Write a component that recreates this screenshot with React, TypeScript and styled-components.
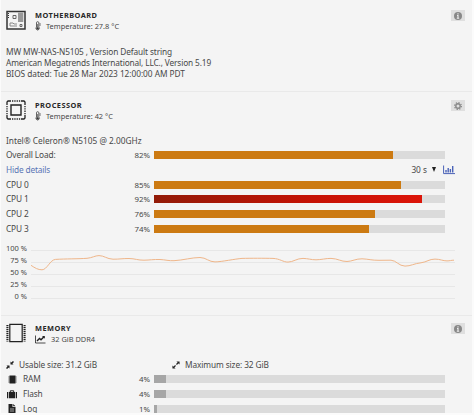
import React from 'react';
import styled, { createGlobalStyle } from 'styled-components';

const cores = [
  { name: 'CPU 0', load: 85 },
  { name: 'CPU 1', load: 92 },
  { name: 'CPU 2', load: 76 },
  { name: 'CPU 3', load: 74 },
];

const App = () => {
  return (
    <React.Fragment>
      <GlobalStyle />
      <Dashboard>
        <Section $height={91}>
          <Header $top={10}>
            <MotherboardIcon />
            <Heading>
              <Title>MOTHERBOARD</Title>
              <Subtitle>
                <ThermometerIcon />
                <Small>Temperature: 27.8 °C</Small>
              </Subtitle>
            </Heading>
            <InfoButton />
          </Header>
          <Details>
            <Line $tracking={-0.12}>MW MW-NAS-N5105 , Version Default string</Line>
            <Line $tracking={-0.13}>
              American Megatrends International, LLC., Version 5.19
            </Line>
            <Line $tracking={-0.04}>
              BIOS dated: Tue 28 Mar 2023 12:00:00 AM PDT
            </Line>
          </Details>
        </Section>
        <Section $height={224}>
          <Header $top={8}>
            <ProcessorIcon />
            <Heading>
              <Title>PROCESSOR</Title>
              <Subtitle>
                <ThermometerIcon />
                <Small>Temperature: 42 °C</Small>
              </Subtitle>
            </Heading>
            <GearButton />
          </Header>
          <Model>Intel® Celeron® N5105 @ 2.00GHz</Model>
          <Usage label="Overall Load:" load={82} />
          <Controls>
            <Link>Hide details</Link>
            <Interval>
              30 s
              <Caret />
              <ChartIcon />
            </Interval>
          </Controls>
          {cores.map((core) => (
            <Usage key={core.name} label={core.name} load={core.load} />
          ))}
          <LoadChart />
        </Section>
        <Section $height={98}>
          <Header $top={7}>
            <MemoryIcon />
            <Heading>
              <Title>MEMORY</Title>
              <Subtitle>
                <TrendIcon />
                <Small>32 GiB DDR4</Small>
              </Subtitle>
            </Heading>
            <InfoButton />
          </Header>
          <Sizes>
            <Size>
              <CompressIcon />
              Usable size: 31.2 GiB
            </Size>
            <Size>
              <ExpandIcon />
              Maximum size: 32 GiB
            </Size>
          </Sizes>
          <Usage label="RAM" icon={<RamIcon />} load={4} muted />
          <Usage label="Flash" icon={<FlashIcon />} load={4} muted />
          <Usage label="Log" icon={<LogIcon />} load={1} muted />
        </Section>
      </Dashboard>
    </React.Fragment>
  );
};

export default App;

type UsageProps = {
  label: string;
  load: number;
  icon?: React.ReactNode;
  muted?: boolean;
};

const Usage = ({ label, load, icon, muted }: UsageProps) => (
  <UsageRow>
    <Label>
      {icon && <IconSlot>{icon}</IconSlot>}
      {label}
    </Label>
    <Percent>{load}%</Percent>
    <Track>
      <Fill
        $tone={muted ? 'muted' : load > 90 ? 'critical' : 'warning'}
        style={{ width: `${muted && load > 1 ? load + 0.1 : load}%` }}
      />
    </Track>
  </UsageRow>
);

const LoadChart = () => (
  <Chart>
    <Axis>
      {[100, 75, 50, 25, 0].map((tick) => (
        <Tick key={tick}>{tick} %</Tick>
      ))}
    </Axis>
    <svg width="424" height="56" viewBox="32 246 424 56" fill="none">
      {[250.5, 262.5, 274.5, 286.5, 298.5].map((y) => (
        <path key={y} d={`M32 ${y}H456`} stroke="#e7e7e7" />
      ))}
      <path
        d="M32 265.3C36 268 39 269.8 43 269.8C48 269.8 51 259.8 56.5 259.4C66 258.8 80 258.9 88 258.3C93 257.9 96 255.6 100 255.6C105 255.6 108 259 114 259.2C120 259.3 124 258.4 130 258.5C136 258.6 139 260.3 145 260.2C151 260.1 154 259.3 161 259.5C166 259.7 170 261 175 260.7C184 260.2 193 257.5 201 257.5C207 257.5 210 262 216 261.9C223 261.8 236 258.9 243 258.4C251 258.2 266 258.2 274 258.4C281 258.7 284 262.1 289 262.1C294 262.1 298 258.3 304 258.4C309 258.5 312 259.8 317 259.8C322 259.8 327 258.3 332 258.4C339 258.6 342 261.6 348 261.5C353 261.4 357 258.7 363 258.8C369 259 373 260.4 380 260.3L392 260.2C397 260.3 400 266.1 406 266.1C412 266.1 415 263.5 422 262.8C428 262 430 259.1 436 259.1C441 259.1 444 260.9 448 260.9C451 260.9 452 260.2 455 260.2"
        stroke="#efb68a"
        strokeWidth="1"
      />
    </svg>
  </Chart>
);

const MotherboardIcon = () => (
  <svg width="20" height="20" viewBox="0 0 20 20" fill="none" stroke="#333">
    <path d="M1 1.5H19V19H1Z" strokeWidth="1.5" />
    <path d="M12 2.5H17.3V12H12Z" fill="#999" stroke="none" />
    <path d="M7 5.5H10V8.5H7ZM14 14.5H16V16.5H14Z" stroke="#666" />
    <path d="M4 13V16H11M4 13H7L8 14H11" stroke="#888" />
    <path d="M2.5 3V9" strokeDasharray="1 1" />
  </svg>
);

const ProcessorIcon = () => (
  <svg width="20" height="20" viewBox="0 0 20 20" fill="none" stroke="#222">
    <path d="M6 1H15M6 19H15M1 6V15M19 6V15" strokeWidth="1.3" strokeDasharray="1.3 1" />
    <path d="M1 5V2L2 1H5M15 1H18L19 2V5M19 15V18L18 19H15M5 19H2L1 18V15" strokeWidth="1.3" />
    <path d="M5 5H15V15H5Z" strokeWidth="1.4" />
  </svg>
);

const MemoryIcon = () => (
  <svg width="20" height="20" viewBox="0 0 21 20" fill="none" stroke="#222">
    <path d="M4 1H17V19H4Z" strokeWidth="1.3" />
    <path d="M1.5 1.5V19M19.5 1.5V19" strokeWidth="2.2" strokeDasharray="1.3 .8" />
  </svg>
);

const ThermometerIcon = () => (
  <svg width="6" height="10" viewBox="0 0 6 10" fill="none" stroke="#555">
    <path d="M1.5 6V1.8A1 1 0 0 1 3.8 1.8V6A1.7 1.7 0 1 1 1.5 6Z" strokeWidth=".9" />
    <circle cx="2.6" cy="7.4" r="1.2" fill="#333" stroke="none" />
    <path d="M2.6 3V7M5 2V5" strokeWidth=".8" />
  </svg>
);

const TrendIcon = () => (
  <svg width="11" height="9" viewBox="0 0 11 9" fill="none" stroke="#222">
    <path d="M.5 .5V8H10.5" strokeWidth=".8" />
    <path d="M2 6L4.5 3.5L6 4.8L9 1.8" strokeWidth="1.4" />
    <path d="M7 1H9.8V3.8Z" fill="#222" stroke="none" />
  </svg>
);

const ChartIcon = () => (
  <svg width="12" height="10" viewBox="0 0 12 10" fill="none" stroke="#4a63b8">
    <path d="M.6 .5V8.6H12" strokeWidth="1" />
    <path d="M3 5V7.5M5.2 3V7.5M7.4 4V7.5M9.7 1V7.5" strokeWidth="1.4" />
  </svg>
);

const CompressIcon = () => (
  <svg width="8" height="8" viewBox="0 0 8 8" fill="#222" stroke="#222">
    <path d="M4.5 3.5V.5L7.5 3.5ZM3.5 4.5H.5L3.5 7.5Z" stroke="none" />
    <path d="M5.2 2.8L7.5 .5M2.8 5.2L.5 7.5" strokeWidth="1.5" />
  </svg>
);

const ExpandIcon = () => (
  <svg width="8" height="8" viewBox="0 0 9 9" fill="#222" stroke="#222">
    <path d="M5 .5H8.5V4ZM.5 5V8.5H4Z" stroke="none" />
    <path d="M5 4L7.5 1.5M1.5 7.5L4 5" strokeWidth="1.4" />
  </svg>
);

const RamIcon = () => (
  <svg width="9" height="9" viewBox="0 0 9 9">
    <path d="M1.5 .5H7.5V8.5H1.5Z" fill="#222" />
    <path d="M1 1.5V8M8 1.5V8" stroke="#222" strokeDasharray="1 1" />
  </svg>
);

const FlashIcon = () => (
  <svg width="10" height="9" viewBox="0 0 10 9" fill="#222">
    <path d="M0 2H1.3V8.3H0ZM2 2H8V8.3H2ZM8.7 2H10V8.3H8.7Z" />
    <path d="M3.3 2V.8H6.7V2" fill="none" stroke="#222" />
  </svg>
);

const LogIcon = () => (
  <svg width="8" height="9" viewBox="0 0 8 9">
    <path d="M.5 0H4.5V3H7.5V9H.5ZM5.2 0L7.5 2.3H5.2Z" fill="#222" />
    <path d="M2 5H6M2 7H6" stroke="#ddd" strokeWidth=".7" />
  </svg>
);

const InfoButton = () => (
  <ActionButton aria-label="Info">
    <svg width="8" height="8" viewBox="0 0 8 8">
      <circle cx="4" cy="4" r="4" fill="#888" />
      <path d="M4 1.2V2.4M3 3.5H4V6.2M2.8 6.2H5.2" stroke="#eee" strokeWidth="1.1" fill="none" />
    </svg>
  </ActionButton>
);

const GearButton = () => (
  <ActionButton aria-label="Settings">
    <svg width="8" height="8" viewBox="0 0 8 8" fill="none" stroke="#888">
      <circle cx="4" cy="4" r="2.2" strokeWidth="1.4" />
      <circle cx="4" cy="4" r="3.4" strokeWidth="1.2" strokeDasharray="1.3 1.37" />
    </svg>
  </ActionButton>
);

const GlobalStyle = createGlobalStyle`
  body {
    margin: 0;
    background: #fbfbfb;
    font-family: 'Noto Sans', 'Open Sans', sans-serif;
    font-size: 8.3px;
    color: #484848;
  }
  * {
    box-sizing: border-box;
  }
  svg {
    display: block;
    flex-shrink: 0;
  }
`;

const Dashboard = styled.div`
  width: 471px;
  height: 413px;
  margin-left: 1px;
  background: #f4f4f4;
`;

const Section = styled.section<{ $height: number }>`
  height: ${({ $height }) => $height}px;
  padding: 0 18px 0 5px;
  & + & {
    border-top: 1px solid #e9e9e9;
  }
`;

const Header = styled.div<{ $top: number }>`
  display: flex;
  padding-top: ${({ $top }) => $top}px;
  margin-right: -11px;
`;

const Heading = styled.div`
  flex: 1;
  margin-left: 9px;
`;

const Title = styled.div`
  height: 11px;
  line-height: 11px;
  font-size: 7.4px;
  font-weight: 700;
  letter-spacing: 0.45px;
  color: #282828;
`;

const Subtitle = styled.div`
  display: flex;
  align-items: center;
  height: 10px;
  gap: 5px;
`;

const Small = styled.span`
  font-size: 7.4px;
`;

const ActionButton = styled.button`
  display: flex;
  align-items: center;
  justify-content: center;
  width: 14px;
  height: 11px;
  padding: 0;
  border: 0;
  background: #dfdfdf;
`;

const Details = styled.div`
  margin-top: 15px;
`;

const Line = styled.div<{ $tracking: number }>`
  height: 10.8px;
  line-height: 11px;
  letter-spacing: ${({ $tracking }) => $tracking}px;
  white-space: nowrap;
`;

const Model = styled.div`
  margin-top: 13px;
  height: 14px;
  line-height: 14px;
`;

const UsageRow = styled.div`
  display: grid;
  grid-template-columns: 120px 24px 291px;
  align-items: center;
  height: 14.7px;
`;

const Label = styled.div`
  display: flex;
  align-items: center;
  line-height: 14px;
  letter-spacing: -0.12px;
`;

const IconSlot = styled.span`
  display: flex;
  justify-content: center;
  width: 12px;
  margin-right: 5px;
`;

const Percent = styled.div`
  font-size: 7.9px;
  line-height: 14px;
  text-align: right;
`;

const Track = styled.div`
  height: 8px;
  margin-left: 4px;
  width: 291px;
  background: #dbdbdb;
`;

const fills = {
  warning: '#cc7a12',
  critical: 'linear-gradient(90deg, #921b08, #c61205 60%, #dc1509)',
  muted: '#a6a6a6',
};

const Fill = styled.div<{ $tone: keyof typeof fills }>`
  height: 100%;
  background: ${({ $tone }) => fills[$tone]};
`;

const Controls = styled.div`
  display: flex;
  justify-content: space-between;
  align-items: center;
  height: 14.5px;
`;

const Link = styled.span`
  color: #5a74b5;
  letter-spacing: -0.15px;
`;

const Interval = styled.div`
  display: flex;
  align-items: center;
  margin-right: -1px;
`;

const Caret = styled.span`
  margin: 0 7px 0 5px;
  border: 2px solid transparent;
  border-top: 5px solid #222;
  border-bottom: 0;
`;

const Chart = styled.div`
  display: flex;
  margin-top: 10px;
`;

const Axis = styled.div`
  width: 26px;
  margin-top: -4px;
  padding-right: 4px;
`;

const Tick = styled.div`
  height: 12.1px;
  line-height: 12px;
  font-size: 7.5px;
  text-align: right;
  white-space: nowrap;
`;

const Sizes = styled.div`
  display: grid;
  grid-template-columns: 166px 1fr;
  align-items: start;
  margin-top: 14px;
  height: 14px;
`;

const Size = styled.div`
  display: flex;
  align-items: center;
  height: 13px;
  gap: 5px;
  letter-spacing: -0.1px;
`;
